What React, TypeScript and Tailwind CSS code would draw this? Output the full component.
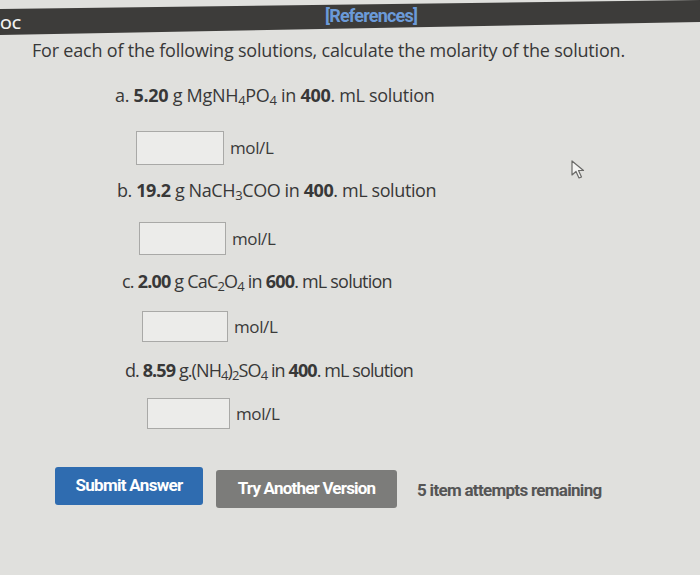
import React from 'react';

const Answer = ({ indent, boxW, h, top }: { indent: string; boxW: string; h: string; top: string }) => (
  <div className={`flex items-center gap-[6px] ${indent} ${top}`}>
    <div className={`${boxW} ${h} border border-[#a9a9a7] bg-[#ececea]`} />
    <span className="text-[17px] text-[#3a3a3a] tracking-[-0.4px]">mol/L</span>
  </div>
);

const S = ({ children }: { children: React.ReactNode }) => (
  <sub className="text-[13px] leading-none">{children}</sub>
);

export default function App() {
  return (
    <div className="w-[700px] h-[575px] overflow-hidden bg-[#e0e0dd] relative" style={{ fontFamily: '"Open Sans", "Noto Sans", sans-serif' }}>
      {/* top bar, photographed at a slight angle */}
      <div className="h-[36px] relative">
        <div className="absolute inset-0 bg-[#3d3c3a] [clip-path:polygon(0_9px,100%_0,100%_22px,0_35px)]" />
        <span className="absolute left-0 top-[12px] text-[15px] font-semibold text-[#f2f2f2]">OC</span>
        <span className="absolute left-[325px] top-[2px] text-[18px] font-bold text-[#6b9ad8] tracking-[-0.8px]" style={{ fontFamily: 'Roboto, sans-serif' }}>
          [References]
        </span>
      </div>

      <div className="text-[#383838]">
        <p className="ml-[32px] mt-[2px] text-[18px] leading-[24px] tracking-[-0.2px]">
          For each of the following solutions, calculate the molarity of the solution.
        </p>

        <p className="ml-[115px] mt-[21px] text-[18px] leading-[24px] tracking-[-0.3px]">
          a. <b>5.20</b> g MgNH<S>4</S>PO<S>4</S> in <b>400</b>. mL solution
        </p>
        <Answer indent="ml-[136px]" boxW="w-[88px]" h="h-[34px]" top="mt-[24px]" />

        <p className="ml-[117px] mt-[13px] text-[18px] leading-[24px] tracking-[-0.4px]">
          b. <b>19.2</b> g NaCH<S>3</S>COO in <b>400</b>. mL solution
        </p>
        <Answer indent="ml-[139px]" boxW="w-[87px]" h="h-[33px]" top="mt-[20px]" />

        <p className="ml-[122px] mt-[14px] text-[18px] leading-[24px] tracking-[-0.8px]">
          c. <b>2.00</b> g CaC<S>2</S>O<S>4</S> in <b>600</b>. mL solution
        </p>
        <Answer indent="ml-[142px]" boxW="w-[86px]" h="h-[31px]" top="mt-[18px]" />

        <p className="ml-[125px] mt-[16px] text-[18px] leading-[24px] tracking-[-0.9px]">
          d. <b>8.59</b> g.(NH<S>4</S>)<S>2</S>SO<S>4</S> in <b>400</b>. mL solution
        </p>
        <Answer indent="ml-[147px]" boxW="w-[83px]" h="h-[31px]" top="mt-[16px]" />

        <div className="flex items-start ml-[55px] mt-[38px]" style={{ fontFamily: 'Roboto, sans-serif' }}>
          <button className="w-[148px] h-[38px] rounded-[3px] bg-[#2f6cb0] text-white text-[17px] font-bold tracking-[-0.7px]">
            Submit Answer
          </button>
          <button className="ml-[13px] mt-[3px] w-[181px] h-[38px] rounded-[3px] bg-[#7c7c7a] text-white text-[17px] font-bold tracking-[-0.8px]">
            Try Another Version
          </button>
          <span className="ml-[20px] mt-[11px] text-[17px] leading-[24px] font-bold text-[#555] tracking-[-0.7px]">5 item attempts remaining</span>
        </div>
      </div>

      {/* mouse pointer */}
      <svg className="absolute left-[571px] top-[160px]" width="16" height="20" viewBox="0 0 16 20">
        <path d="M1 1 L1 15 L5 11.5 L8 18 L10.5 17 L7.5 10.5 L12.5 10.5 Z" fill="#f4f4f2" stroke="#6a6a68" strokeWidth="1.2" strokeLinejoin="round" />
      </svg>
    </div>
  );
}
